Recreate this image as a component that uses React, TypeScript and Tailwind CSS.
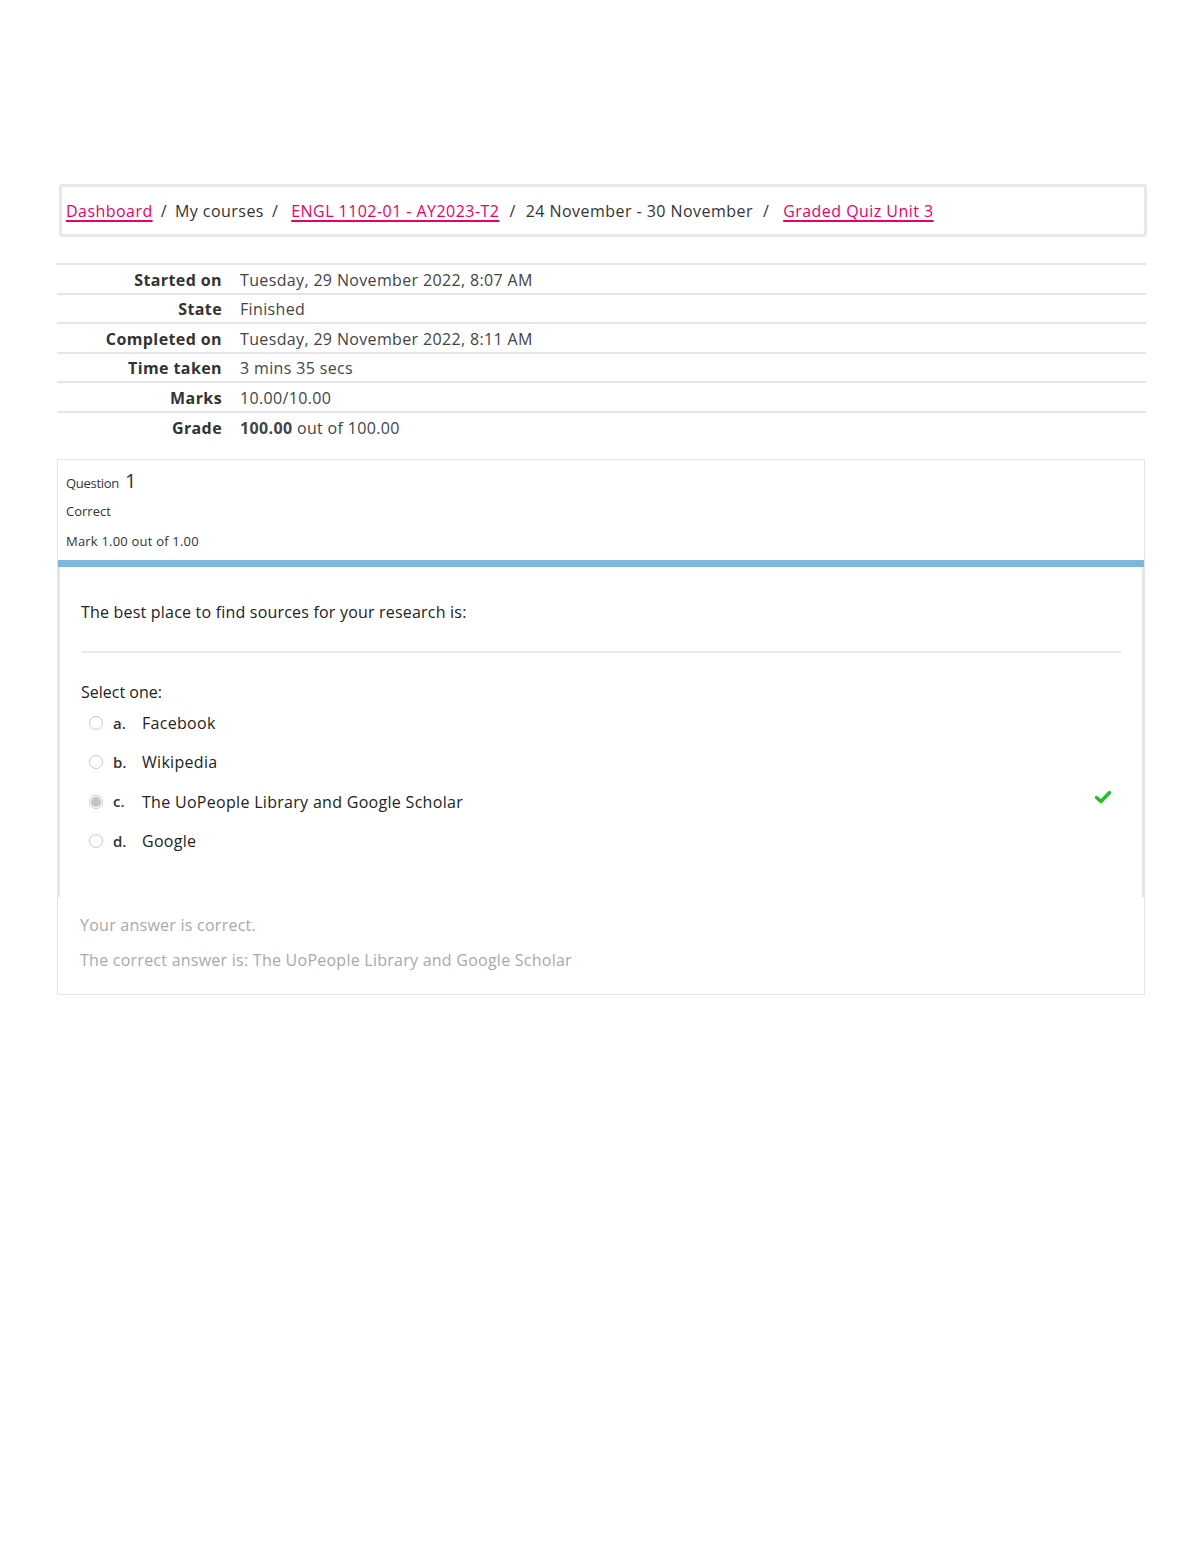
import React from "react";

const rows: { label: string; value: React.ReactNode }[] = [
  { label: "Started on", value: "Tuesday, 29 November 2022, 8:07 AM" },
  { label: "State", value: "Finished" },
  { label: "Completed on", value: "Tuesday, 29 November 2022, 8:11 AM" },
  { label: "Time taken", value: "3 mins 35 secs" },
  { label: "Marks", value: "10.00/10.00" },
  {
    label: "Grade",
    value: (
      <>
        <b>100.00</b> out of 100.00
      </>
    ),
  },
];

const options = [
  { letter: "a.", text: "Facebook", checked: false },
  { letter: "b.", text: "Wikipedia", checked: false },
  { letter: "c.", text: "The UoPeople Library and Google Scholar", checked: true },
  { letter: "d.", text: "Google", checked: false },
];

const Radio = ({ checked }: { checked: boolean }) => (
  <span className="flex h-[14px] w-[14px] items-center justify-center rounded-full border border-[#c8c8c8] bg-white">
    {checked && <span className="h-[10px] w-[10px] rounded-full bg-[#c4c4c4]" />}
  </span>
);

export default function App() {
  return (
    <div
      className="min-h-[1553px] bg-white pt-[184px] text-[#222]"
      style={{ fontFamily: '"Open Sans", "Noto Sans", sans-serif' }}
    >
      <div className="ml-[59px] mr-[53px] rounded-[3px] border-[3px] border-[#e6e8ee] px-[4px] pb-[13px] pt-[14px] text-[16px] leading-[20px] tracking-[0.45px] text-[#333]">
        <a className="text-[#ea0066] underline decoration-[2px] underline-offset-[3px]">Dashboard</a>
        <span className="px-[8px]">/</span>
        <span>My courses</span>
        <span className="pl-[8px] pr-[13px]">/</span>
        <a className="text-[#ea0066] underline decoration-[2px] underline-offset-[3px]">ENGL 1102-01 - AY2023-T2</a>
        <span className="px-[10px]">/</span>
        <span>24 November - 30 November</span>
        <span className="pl-[10px] pr-[14px]">/</span>
        <a className="text-[#ea0066] underline decoration-[2px] underline-offset-[3px]">Graded Quiz Unit 3</a>
      </div>

      <div className="ml-[57px] mr-[54px] mt-[26px] border-t-2 border-[#e4e6ea]">
        {rows.map((r, i) => (
          <div
            key={r.label}
            className={
              "flex h-[29.5px] items-center pt-[2px] text-[16px] " +
              (i < rows.length - 1 ? "border-b-2 border-[#e4e6ea]" : "")
            }
          >
            <div className="w-[165px] text-right font-bold tracking-[0.4px] text-[#333]">{r.label}</div>
            <div className="pl-[18px] tracking-[0.35px] text-[#444]">{r.value}</div>
          </div>
        ))}
      </div>

      <div className="ml-[57px] mr-[55px] mt-[17px] border border-[#e3e5ea]">
        <div className="px-[8px] pb-[10px] pt-[10px] text-[#333]">
          <div className="flex items-baseline text-[13px] leading-[22px]">
            <span className="tracking-[-0.3px]">Question</span>
            <span className="ml-[6px] text-[20px]">1</span>
          </div>
          <div className="mt-[8px] text-[13px] leading-[18px]">Correct</div>
          <div className="mt-[12px] text-[13px] leading-[18px] tracking-[0.2px]">Mark 1.00 out of 1.00</div>
        </div>
        <div className="h-[7px] bg-[#7fb6dd]" />
        <div className="relative border-x-2 border-[#e3e5ea] px-[21px] pb-[44px] pt-[33px] text-[16px] text-[#222]">
          <p className="leading-[24px] tracking-[0.2px]">The best place to find sources for your research is:</p>
          <div className="mt-[27px] h-[2px] bg-[#e6e8ec]" />
          <p className="mt-[27px] leading-[24px]">Select one:</p>
          <div className="mt-[7px] flex flex-col gap-[15.3px]">
            {options.map((o) => (
              <div key={o.letter} className="flex h-[24px] items-center">
                <span className="ml-[8px] mr-[10px]">
                  <Radio checked={o.checked} />
                </span>
                <span className="w-[29px] text-[15px] font-semibold text-[#333]">{o.letter}</span>
                <span className="tracking-[0.3px]">{o.text}</span>
                {o.checked && (
                  <svg
                    className="absolute right-[31px]"
                    width="16"
                    height="14"
                    viewBox="0 0 16 14"
                    style={{ marginTop: "-10px" }}
                  >
                    <path
                      d="M1.5 7.5 L6 11.5 L14.5 2.5"
                      fill="none"
                      stroke="#1ec51e"
                      strokeWidth="3.5"
                      strokeLinecap="round"
                      strokeLinejoin="round"
                    />
                  </svg>
                )}
              </div>
            ))}
          </div>
        </div>
        <div className="px-[22px] pb-[22px] pt-[16px] text-[16px] leading-[24px] tracking-[0.25px] text-[#a9a9a9]">
          <p>Your answer is correct.</p>
          <p className="mt-[11px]">The correct answer is: The UoPeople Library and Google Scholar</p>
        </div>
      </div>
    </div>
  );
}
